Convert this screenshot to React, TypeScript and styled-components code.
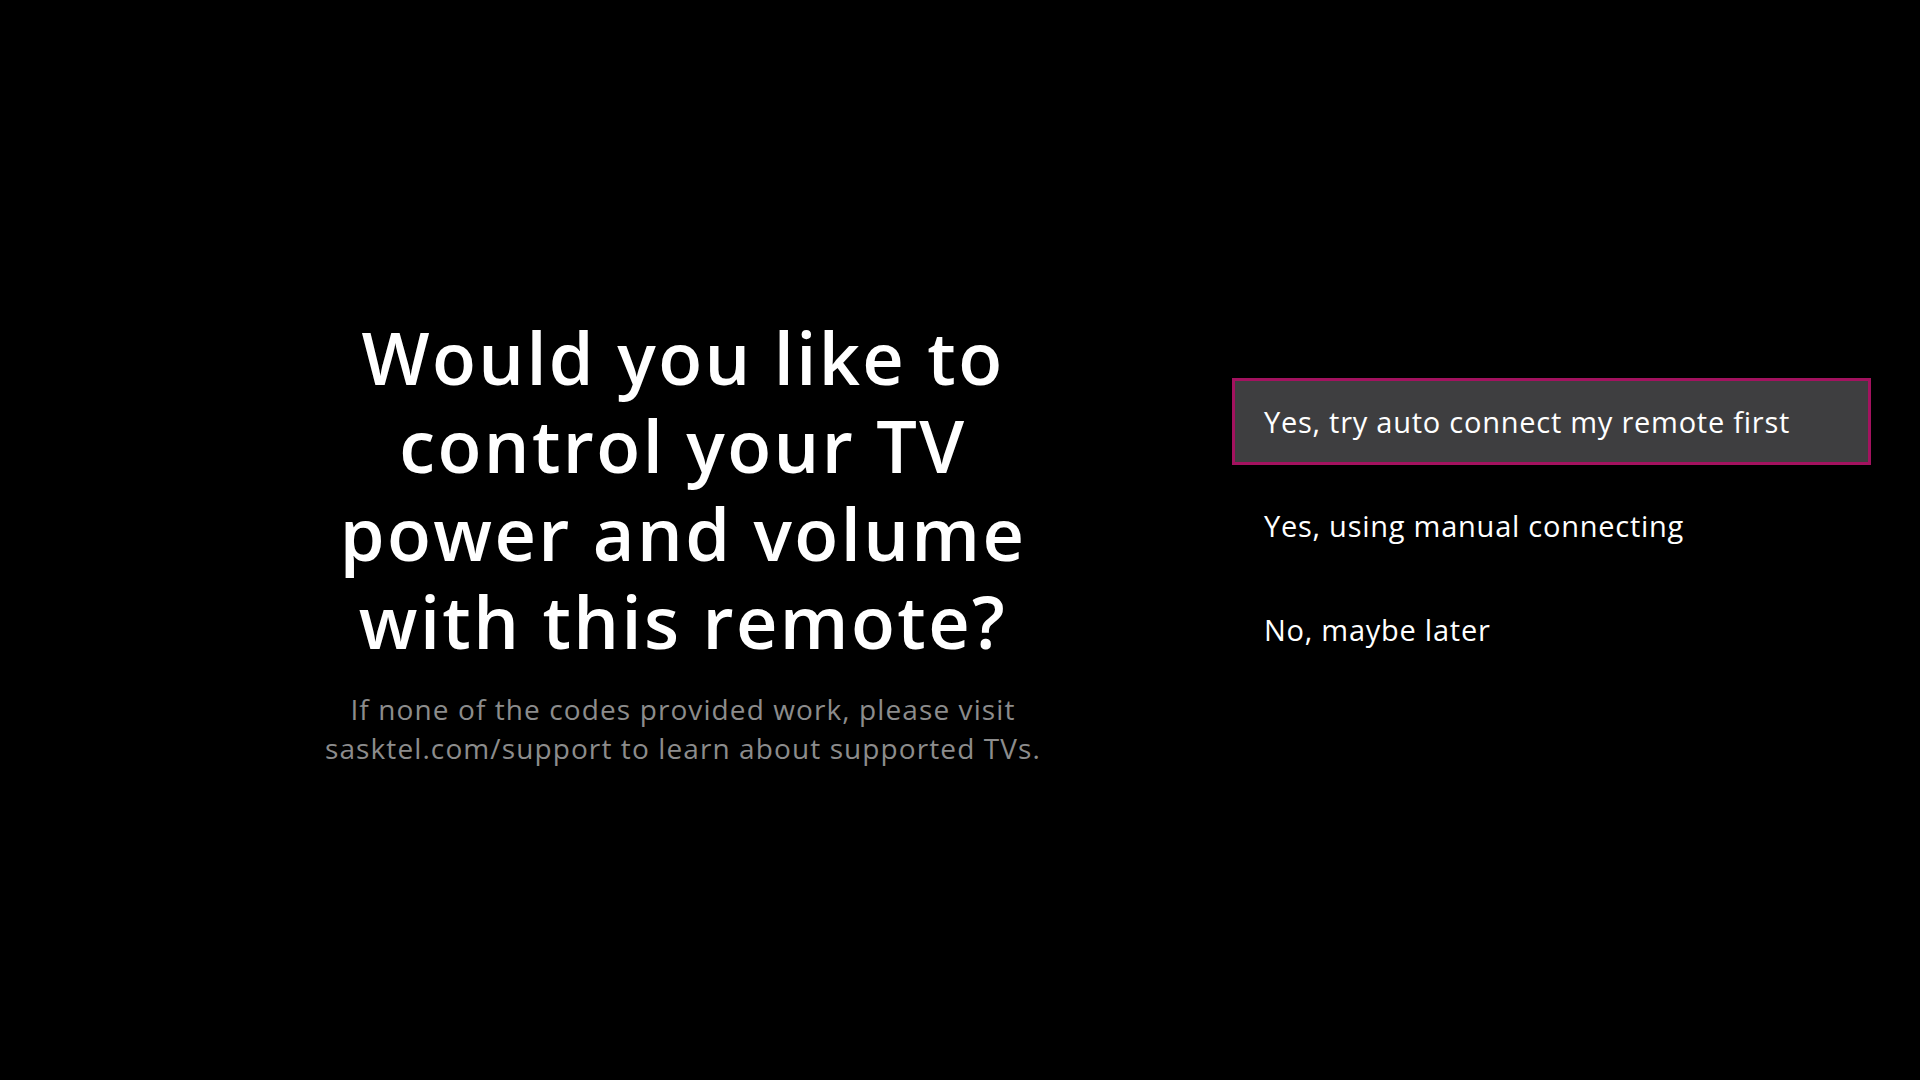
import React from "react";
import styled, { createGlobalStyle } from "styled-components";

const GlobalStyle = createGlobalStyle`
  html, body {
    margin: 0;
    padding: 0;
    background: #000;
  }
  #root {
    height: 100vh;
  }
`;

const titleLines = [
  "Would you like to",
  "control your TV",
  "power and volume",
  "with this remote?",
];

const hintLines = [
  "If none of the codes provided work, please visit",
  "sasktel.com/support to learn about supported TVs.",
];

const options = [
  "Yes, try auto connect my remote first",
  "Yes, using manual connecting",
  "No, maybe later",
];

const Screen = styled.div`
  height: 1080px;
  width: 1920px;
  background: #000;
  display: flex;
  align-items: center;
  padding-left: 318px;
  box-sizing: border-box;
  font-family: "Open Sans", "Liberation Sans", sans-serif;
`;

const Prompt = styled.div`
  width: 730px;
  display: flex;
  flex-direction: column;
  align-items: center;
  text-align: center;
`;

const Title = styled.h1`
  margin: 0;
  color: #fff;
  font-size: 72px;
  font-weight: 600;
  letter-spacing: 2.4px;
`;

const TitleLine = styled.span`
  display: block;
  height: 88px;
  line-height: 88px;
  white-space: nowrap;
`;

const Hint = styled.p`
  margin: 25px 0 0;
  color: #8c8c8c;
  font-size: 28px;
  letter-spacing: 1.1px;
`;

const HintLine = styled.span`
  display: block;
  height: 39px;
  line-height: 39px;
  white-space: nowrap;
`;

const Menu = styled.ul`
  list-style: none;
  margin: 0 0 30px 184px;
  padding: 0;
  width: 639px;
  display: flex;
  flex-direction: column;
  gap: 17px;
`;

const Option = styled.li<{ $focused?: boolean }>`
  height: 87px;
  box-sizing: border-box;
  display: flex;
  align-items: center;
  padding-left: 29px;
  color: #fff;
  font-size: 29px;
  letter-spacing: 0.75px;
  border: 3px solid ${(p) => (p.$focused ? "#a3125f" : "transparent")};
  background: ${(p) => (p.$focused ? "#3e3e40" : "transparent")};
`;

export default function App() {
  return (
    <>
      <GlobalStyle />
      <Screen>
        <Prompt>
          <Title>
            {titleLines.map((line) => (
              <TitleLine key={line}>{line}</TitleLine>
            ))}
          </Title>
          <Hint>
            {hintLines.map((line) => (
              <HintLine key={line}>{line}</HintLine>
            ))}
          </Hint>
        </Prompt>
        <Menu>
          {options.map((label, i) => (
            <Option key={label} $focused={i === 0}>
              {label}
            </Option>
          ))}
        </Menu>
      </Screen>
    </>
  );
}
